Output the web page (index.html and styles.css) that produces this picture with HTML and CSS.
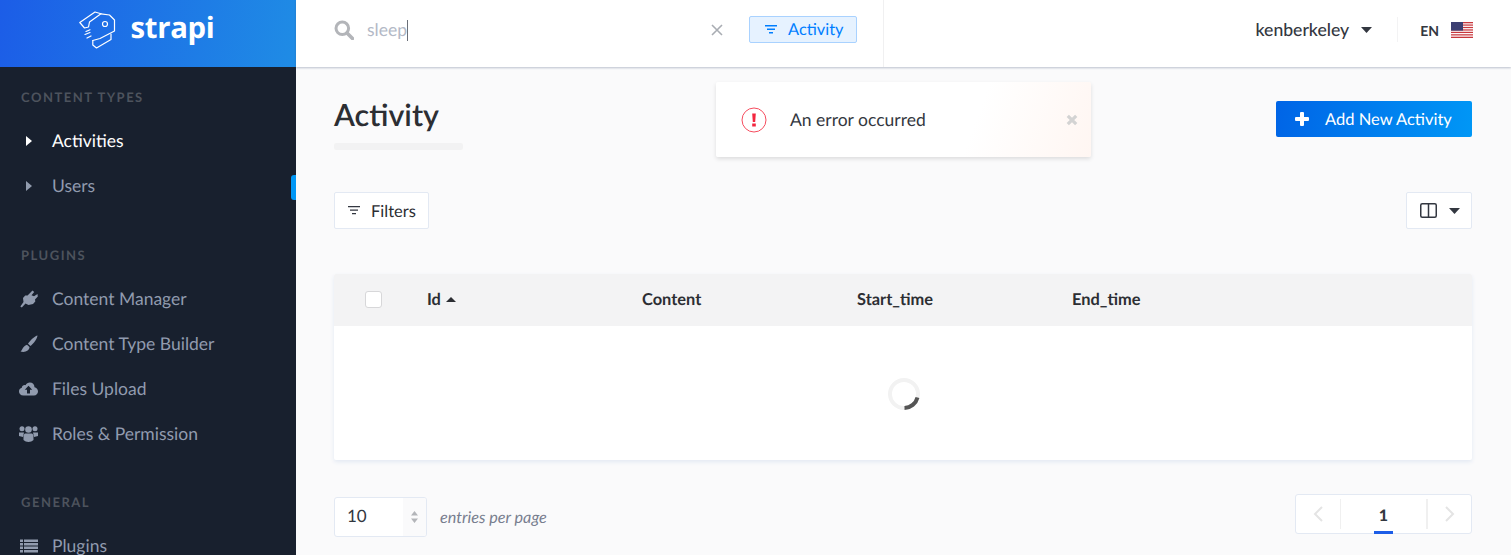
FILE: index.html
```html
<!DOCTYPE html>
<html lang="en">
<head>
<meta charset="utf-8">
<title>Activity - strapi</title>
<link rel="stylesheet" href="styles.css">
</head>
<body>
<div class="app">
  <aside class="sidebar">
    <div class="brand">
      <svg class="brand-icon" viewBox="0 0 37 38" width="37" height="38" fill="none" stroke="#fff" stroke-width="1.200" stroke-linejoin="round" stroke-linecap="round">
        <path d="M0.800 11.500 L16 1 L22 2.800 L10.500 11 L9.500 16 L5.500 17 Z"/>
        <path d="M22 2.800 L30.500 4 L35.500 9 L35.500 20 L21 27.500 L13.800 29.500"/>
        <circle cx="26" cy="13" r="2.500"/>
        <path d="M13.800 29.500 L13.800 34 L17.500 37 L32 28.500 L32 23"/>
        <path d="M7 20.500 L11 18.800 M6 23.500 L11 21.500 M8 27 L12 25"/>
      </svg>
      <span class="brand-name">strapi</span>
    </div>
    <nav class="nav">
      <h3 class="nav-title">Content Types</h3>
      <ul class="nav-list">
        <li class="nav-item nav-item-active"><svg class="caret-icon" viewBox="0 0 6 10" width="6" height="10"><path d="M0 0 L6 5 L0 10 Z" fill="currentColor"/></svg><span>Activities</span></li>
        <li class="nav-item"><svg class="caret-icon" viewBox="0 0 6 10" width="6" height="10"><path d="M0 0 L6 5 L0 10 Z" fill="currentColor"/></svg><span>Users</span></li>
      </ul>
      <h3 class="nav-title nav-title-next">Plugins</h3>
      <ul class="nav-list">
        <li class="nav-item"><span class="nav-icon"><svg viewBox="0 0 18 18" width="18" height="18"><path fill="currentColor" d="M12.500 0.500 L14.200 2 L11.500 5.300 L14 6.300 L17.500 4 L17.800 6.500 L15 9.500 L15.300 11.500 L13 14 L8.500 15 L5.500 13.500 L1.800 17.500 L0.300 16.500 L3.500 12 L3 8 L5.200 5.500 L7.500 5.500 Z"/></svg></span><span>Content Manager</span></li>
        <li class="nav-item"><span class="nav-icon"><svg viewBox="0 0 18 18" width="18" height="18"><path fill="currentColor" d="M17.500 0.500 C17.500 3 13.500 9 10.500 11 L8 8.800 C10 5.500 15 1 17.500 0.500 Z M7 9.800 L9.500 12 C9.500 15.500 5 18 0.500 16.500 C2.500 15.800 2 11.500 7 9.800 Z"/></svg></span><span>Content Type Builder</span></li>
        <li class="nav-item"><span class="nav-icon"><svg viewBox="0 0 19 14" width="19" height="14"><path fill="currentColor" fill-rule="evenodd" d="M4.500 13.500 C1.500 13.500 0 11.500 0 9.500 C0 7.500 1.300 6.300 2.800 5.800 C3 3.800 4.800 2.700 6.500 3.200 C7.500 1.300 9 0.500 10.800 0.500 C13.500 0.500 15.500 2.500 15.500 5.300 C17.500 5.800 19 7.300 19 9.500 C19 11.800 17.200 13.500 15 13.500 Z M9.500 3.800 L5.800 7.800 L8 7.800 L8 11.500 L11 11.500 L11 7.800 L13.200 7.800 Z"/></svg></span><span>Files Upload</span></li>
        <li class="nav-item"><span class="nav-icon"><svg viewBox="0 0 19 16" width="19" height="16"><g fill="currentColor"><circle cx="3" cy="2.800" r="2.500"/><circle cx="16" cy="2.800" r="2.500"/><circle cx="9.500" cy="3.500" r="3.300"/><path d="M0 6.500 L5 6.500 L4 11 L0 10 Z M19 6.500 L14 6.500 L15 11 L19 10 Z M6 7.500 L13 7.500 C14.500 8 14.500 10 14.500 14 C12 16.500 7 16.500 4.500 14 C4.500 10 4.500 8 6 7.500 Z"/></g></svg></span><span>Roles &amp; Permission</span></li>
      </ul>
      <h3 class="nav-title nav-title-next nav-title-general">General</h3>
      <ul class="nav-list">
        <li class="nav-item"><span class="nav-icon"><svg viewBox="0 0 18 14" width="18" height="14"><path fill="currentColor" d="M0 0.500 H3 V3 H0 Z M4 0.500 H18 V3 H4 Z M0 4 H3 V6.500 H0 Z M4 4 H18 V6.500 H4 Z M0 7.500 H3 V10 H0 Z M4 7.500 H18 V10 H4 Z M0 11 H3 V13.500 H0 Z M4 11 H18 V13.500 H4 Z"/></svg></span><span>Plugins</span></li>
      </ul>
    </nav>
    <span class="nav-marker"></span>
  </aside>

  <div class="content">
    <header class="topbar">
      <div class="search">
        <svg class="search-icon" viewBox="0 0 20 20" width="20" height="20" fill="none" stroke="#b3b5b9"><circle cx="8.300" cy="8.300" r="6.300" stroke-width="3"/><path d="M13 13 L18.500 18.500" stroke-width="3.600" stroke-linecap="round"/></svg>
        <span class="search-value">sleep</span><span class="search-cursor"></span>
        <svg class="search-clear" viewBox="0 0 12 12" width="12" height="12" fill="none" stroke="#a9adb3" stroke-width="1.600"><path d="M1 1 L11 11 M11 1 L1 11"/></svg>
        <span class="search-tag">
          <svg viewBox="0 0 12 9" width="12" height="9"><path fill="#007eff" d="M0 0 H12 V1.500 H0 Z M2 3.500 H10 V5 H2 Z M4 7 H8 V8.500 H4 Z"/></svg>
          Activity
        </span>
      </div>
      <div class="account">
        <span class="user">kenberkeley</span>
        <svg class="drop" viewBox="0 0 11 6" width="11" height="6"><path d="M0 0 H11 L5.500 6 Z" fill="#333740"/></svg>
        <span class="account-sep"></span>
        <span class="lang">EN</span>
        <svg class="flag" viewBox="0 0 22 16" width="22" height="16"><rect width="22" height="16" fill="#fff"/><g fill="#c8373d"><rect width="22" height="1.300"/><rect y="2.450" width="22" height="1.230"/><rect y="4.900" width="22" height="1.230"/><rect y="7.350" width="22" height="1.230"/><rect y="9.800" width="22" height="1.230"/><rect y="12.250" width="22" height="1.230"/><rect y="14.700" width="22" height="1.300"/></g><rect width="12" height="8.600" fill="#3c3f72"/></svg>
      </div>
    </header>

    <main class="page">
      <div class="page-head">
        <div>
          <h1 class="page-title">Activity</h1>
          <div class="title-skeleton"></div>
        </div>
        <button class="btn-add">
          <svg viewBox="0 0 14 14" width="14" height="14"><path fill="#fff" d="M5 1 Q5 0 6 0 H8 Q9 0 9 1 V5 H13 Q14 5 14 6 V8 Q14 9 13 9 H9 V13 Q9 14 8 14 H6 Q5 14 5 13 V9 H1 Q0 9 0 8 V6 Q0 5 1 5 H5 Z"/></svg>
          Add New Activity
        </button>
      </div>

      <div class="tools">
        <button class="btn-tool btn-filter">
          <svg viewBox="0 0 12 9" width="12" height="9"><path fill="#333740" d="M0 0 H12 V1.300 H0 Z M2 3.500 H10 V4.800 H2 Z M4 7 H8 V8.300 H4 Z"/></svg>
          Filters
        </button>
        <button class="btn-tool btn-columns">
          <svg viewBox="0 0 17 15" width="17" height="15" fill="none" stroke="#333740" stroke-width="1.500"><rect x="0.750" y="0.750" width="15.500" height="13.500" rx="1.500"/><path d="M8.500 1 V14"/></svg>
          <svg viewBox="0 0 11 6" width="11" height="6"><path d="M0 0 H11 L5.500 6 Z" fill="#333740"/></svg>
        </button>
      </div>

      <section class="table-card">
        <div class="table-row-head">
          <span class="check-cell"><span class="checkbox"></span></span>
          <span class="col col-id">Id <svg viewBox="0 0 10 5" width="10" height="5"><path d="M0 5 H10 L5 0 Z" fill="#2c2e33"/></svg></span>
          <span class="col">Content</span>
          <span class="col">Start_time</span>
          <span class="col">End_time</span>
        </div>
        <div class="table-loading">
          <svg viewBox="0 0 34 34" width="34" height="34" fill="none" stroke-width="4"><circle cx="17" cy="17" r="14" stroke="#f2f2f2"/><path d="M30.500 20.500 A14 14 0 0 1 17.500 31" stroke="#555"/></svg>
        </div>
      </section>

      <div class="foot">
        <div class="per-page">
          <div class="per-select">
            <span class="per-value">10</span>
            <span class="per-arrows"><svg viewBox="0 0 7 12" width="7" height="12"><path fill="#b3b5b9" d="M0 4.500 L3.500 0 L7 4.500 Z M0 7.500 H7 L3.500 12 Z"/></svg></span>
          </div>
          <span class="per-label">entries per page</span>
        </div>
        <div class="pager">
          <span class="pager-arrow"><svg viewBox="0 0 10 16" width="10" height="16" fill="none" stroke="#e4e4e4" stroke-width="2"><path d="M9 1 L2 8 L9 15"/></svg></span>
          <span class="pager-page">1</span>
          <span class="pager-arrow pager-next"><svg viewBox="0 0 10 16" width="10" height="16" fill="none" stroke="#e4e4e4" stroke-width="2"><path d="M1 1 L8 8 L1 15"/></svg></span>
        </div>
      </div>
    </main>

    <div class="toast">
      <svg class="toast-icon" viewBox="0 0 26 26" width="26" height="26"><circle cx="13" cy="13" r="12" fill="none" stroke="#f64d5f" stroke-width="1"/><path d="M11.200 6.500 H14.800 L14.200 15 H11.800 Z M11.200 16.500 H14.800 V19.500 H11.200 Z" fill="#f3263f"/></svg>
      <span class="toast-text">An error occurred</span>
      <svg class="toast-close" viewBox="0 0 12 12" width="12" height="12" fill="none" stroke="#d3d3d3" stroke-width="3.200"><path d="M1.800 1.800 L10.200 10.200 M10.200 1.800 L1.800 10.200"/></svg>
    </div>
  </div>
</div>
</body>
</html>
```

FILE: styles.css
```css
* { box-sizing: border-box; }
html, body { margin: 0; height: 100%; overflow: hidden; }
body { font-family: Lato, "Liberation Sans", sans-serif; color: #333740; background: #fafafb; text-rendering: geometricPrecision; }
button { font-family: inherit; cursor: pointer; text-rendering: inherit; }
ul { list-style: none; margin: 0; padding: 0; }
h1, h3 { margin: 0; }

.app { display: flex; height: 555px; overflow: hidden; }

.sidebar { position: relative; flex: 0 0 296px; background: #18202e; overflow: hidden; }
.brand { height: 67px; display: flex; align-items: center; justify-content: center; gap: 15px; padding: 0 3px 0 0; background: linear-gradient(100deg, #1c5de7, #1f8ce5); }
.brand-icon { margin-top: -8px; }
.brand-name { font-family: "Open Sans", sans-serif; font-weight: 700; font-size: 29.300px; line-height: 36px; color: #fff; letter-spacing: -0.3px; margin-top: -14px; }

.nav { padding: 22px 0 0 0; }
.nav-title { padding-left: 21px; font-size: 13px; line-height: 16px; font-weight: 700; letter-spacing: 1.500px; text-transform: uppercase; color: #4d535d; }
.nav-title-next { margin-top: 39px; }
.nav-title-general { margin-top: 38px; }
.nav-list { margin-top: 13px; }
.nav-item { display: flex; align-items: center; height: 45px; font-size: 17.500px; color: #919bae; position: relative; }
.nav-item-active { color: #fff; }
.nav-item > span:last-child { position: absolute; left: 52px; }
.caret-icon { margin-left: 26px; }
.nav-icon { display: flex; align-items: center; justify-content: center; width: 19px; margin-left: 19px; }
.nav-marker { position: absolute; left: 291px; top: 175px; width: 5px; height: 25px; background: #0097f6; border-radius: 3px 0 0 3px; }

.content { position: relative; flex: 1; min-width: 0; }

.topbar { position: relative; height: 67px; background: #fff; display: flex; box-shadow: 0 1px 2px rgba(70, 85, 120, 0.35); z-index: 1; }
.search { flex: 0 0 588px; display: flex; align-items: center; padding: 0 0 7px 38px; border-right: 1px solid #f0f0f1; position: relative; }
.search-value { margin: -1px 0 0 13px; font-size: 17.500px; color: #b3b9c6; }
.search-cursor { width: 1px; height: 21px; background: #6b7079; }
.search-icon { flex: none; }
.search-clear { margin-left: auto; margin-right: 26px; }
.search-tag { display: flex; align-items: center; gap: 11px; height: 27px; width: 108px; margin: -1px 26px 0 0; padding-left: 15px; font-size: 16.400px; color: #007eff; background: #e6f2ff; border: 1px solid #a9d2ff; border-radius: 2px; }
.account { flex: 1; display: flex; align-items: center; justify-content: flex-end; padding: 0 38px 7px 0; }
.user { font-size: 17.600px; font-weight: 500; margin-top: -1px; }
.drop { margin: -1px 0 0 12px; }
.account-sep { width: 1px; height: 25px; background: #f3f3f4; margin: -1px 22px 0 25px; }
.lang { font-size: 14px; font-weight: 700; }
.flag { margin-left: 12px; }

.page { padding: 29px 39px 0 38px; }
.page-head { display: flex; justify-content: space-between; align-items: flex-start; }
.page-title { padding-top: 1px; font-size: 30.500px; line-height: 36px; font-weight: 600; color: #2c2e33; }
.title-skeleton { width: 129px; height: 7px; margin-top: 10px; background: #f2f2f3; border-radius: 2px; }
.btn-add { display: flex; align-items: center; gap: 16px; height: 36px; width: 196px; margin-top: 5px; padding: 0 0 1px 19px; border: 0; border-radius: 2px; font-size: 16.500px; color: #fff; background: linear-gradient(100deg, #0064e6, #0097f6); }

.tools { display: flex; justify-content: space-between; margin-top: 42px; }
.btn-tool { display: flex; align-items: center; height: 37px; background: #fff; border: 1px solid #e3e9f3; border-radius: 2px; padding: 0; color: #2c2e33; font-size: 16.500px; }
.btn-filter { width: 95px; gap: 11px; padding-left: 13px; }
.btn-columns { width: 66px; gap: 12px; padding-left: 13px; }

.table-card { margin-top: 45px; background: #fff; border-radius: 2px; box-shadow: 0 2px 4px #e3e9f3; overflow: hidden; }
.table-row-head { display: grid; grid-template-columns: 93px 215px 215px 215px 1fr; align-items: center; height: 52px; background: #f3f3f4; font-size: 16.400px; font-weight: 700; color: #2c2e33; }
.col { padding-bottom: 2px; }
.check-cell { display: flex; padding-left: 31px; }
.checkbox { width: 17px; height: 17px; margin-top: -1px; background: #fff; border: 1px solid #d7d7d9; border-radius: 3px; }
.col-id { display: flex; align-items: center; gap: 5px; }
.table-loading { display: flex; align-items: center; justify-content: center; height: 134px; padding: 1px 0 0 2px; }

.foot { display: flex; justify-content: space-between; align-items: flex-start; margin-top: 34px; }
.per-page { display: flex; align-items: center; gap: 13px; margin-top: 3px; }
.per-select { display: flex; width: 93px; height: 40px; background: #fff; border: 1px solid #e3e9f3; border-radius: 3px; overflow: hidden; }
.per-value { flex: 1; padding-left: 12px; font-size: 17px; line-height: 36px; }
.per-arrows { display: flex; align-items: center; justify-content: center; width: 23px; background: #fafafb; }
.per-label { font-size: 16.200px; font-style: italic; color: #787e8f; }
.pager { display: flex; align-items: center; width: 177px; height: 40px; background: #fff; border: 1px solid #e3e9f3; border-radius: 3px; }
.pager-arrow { display: flex; align-items: center; justify-content: center; width: 45px; height: 30px; border-right: 1px solid #f0f0f0; }
.pager-next { border-right: 0; border-left: 2px solid #f0f0f0; }
.pager-page { position: relative; flex: 1; height: 30px; text-align: center; font-size: 16px; font-weight: 900; line-height: 34px; }
.pager-page::after { content: ""; position: absolute; left: 33px; bottom: -5px; width: 19px; height: 3px; background: #1c5de7; }

.toast { position: absolute; left: 420px; top: 82px; z-index: 2; display: flex; align-items: center; width: 375px; height: 75px; padding: 0 13px 0 25px; border-radius: 2px; background: linear-gradient(110deg, #fff 68%, #fff6f2); box-shadow: 0 2px 4px rgba(0, 0, 0, 0.12); }
.toast-text { margin-left: 23px; font-size: 17.500px; }
.toast-close { margin-left: auto; }
```
